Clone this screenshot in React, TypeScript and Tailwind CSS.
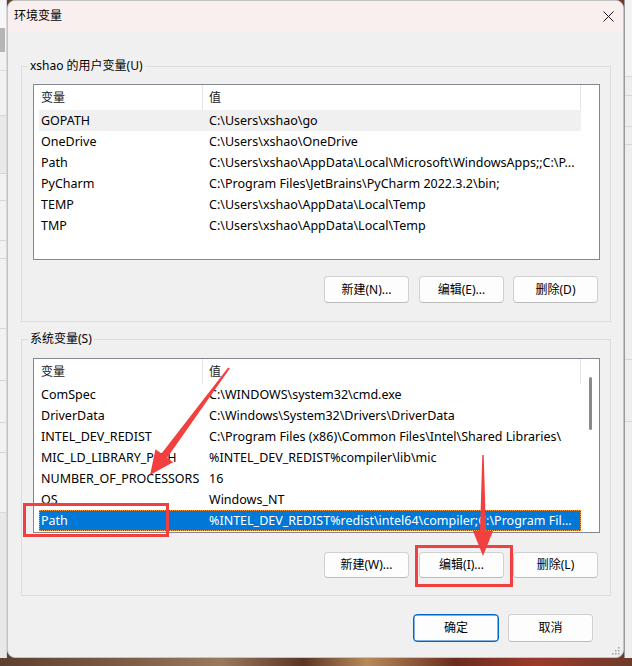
import { memo } from "react";

type Row = { name: string; value: string };

const USER_ROWS: Row[] = [
  { name: "GOPATH", value: "C:\\Users\\xshao\\go" },
  { name: "OneDrive", value: "C:\\Users\\xshao\\OneDrive" },
  { name: "Path", value: "C:\\Users\\xshao\\AppData\\Local\\Microsoft\\WindowsApps;;C:\\P..." },
  { name: "PyCharm", value: "C:\\Program Files\\JetBrains\\PyCharm 2022.3.2\\bin;" },
  { name: "TEMP", value: "C:\\Users\\xshao\\AppData\\Local\\Temp" },
  { name: "TMP", value: "C:\\Users\\xshao\\AppData\\Local\\Temp" },
];

const SYSTEM_ROWS: Row[] = [
  { name: "ComSpec", value: "C:\\WINDOWS\\system32\\cmd.exe" },
  { name: "DriverData", value: "C:\\Windows\\System32\\Drivers\\DriverData" },
  { name: "INTEL_DEV_REDIST", value: "C:\\Program Files (x86)\\Common Files\\Intel\\Shared Libraries\\" },
  { name: "MIC_LD_LIBRARY_PATH", value: "%INTEL_DEV_REDIST%compiler\\lib\\mic" },
  { name: "NUMBER_OF_PROCESSORS", value: "16" },
  { name: "OS", value: "Windows_NT" },
  { name: "Path", value: "%INTEL_DEV_REDIST%redist\\intel64\\compiler;C:\\Program Fil..." },
];

const VarList = memo(function VarList({
  rows,
  height,
  hover,
  selected,
  scroll,
}: {
  rows: Row[];
  height: string;
  hover?: number;
  selected?: number;
  scroll?: boolean;
}) {
  return (
    <div className={`ml-[11px] w-[567px] ${height} border border-[#828790] bg-white flex overflow-hidden`}>
      <div className="ml-[5px] w-[542px] flex flex-col">
        <div className="h-[25px] shrink-0 flex border-r border-[#e5e5e5] text-[#1a1a1a]">
          <div className="w-[164px] border-r border-[#e5e5e5] pl-[2px] flex items-center">变量</div>
          <div className="pl-[6px] flex items-center">值</div>
        </div>
        {rows.map((r, i) => {
          const sel = i === selected;
          const hov = i === hover;
          return (
            <div
              key={r.name + i}
              className={`h-[21px] shrink-0 pt-[1px] flex items-center whitespace-nowrap text-[12.5px] ${
                sel
                  ? "bg-[#0078d7] text-white outline outline-1 outline-dotted outline-[#ff9a3c] -outline-offset-1"
                  : hov
                  ? "bg-[#f0f0f0] text-black"
                  : "text-black"
              }`}
            >
              <div className="w-[164px] pl-[2px] truncate">{r.name}</div>
              <div className="flex-1 pl-[6px] truncate">{r.value}</div>
            </div>
          );
        })}
      </div>
      <div className="w-[18px] pt-[18px]">
        {scroll && <div className="ml-[8px] w-[3px] h-[53px] rounded-full bg-[#8a8a8a]" />}
      </div>
    </div>
  );
});

function Btn({ label, primary, h = "h-[27px]", w = "w-[85px]" }: { label: string; primary?: boolean; h?: string; w?: string }) {
  return (
    <div
      className={`${w} ${h} rounded-[4px] bg-[#fdfdfd] flex items-center justify-center text-[12px] text-black ${
        primary ? "border border-[#0067c0] shadow-[inset_0_0_0_0.5px_#0067c0]" : "border border-[#d0d0d0] border-b-[#bcbcbc]"
      }`}
    >
      {label}
    </div>
  );
}

function Group({ label, children, className }: { label: string; children: React.ReactNode; className?: string }) {
  return (
    <fieldset className={`ml-[13px] w-[590px] border border-[#dcdcdc] ${className ?? ""}`}>
      <legend className="ml-[6px] px-[2px] leading-[16px] text-black">{label}</legend>
      {children}
    </fieldset>
  );
}

function LeftStrip() {
  return (
    <div className="w-[7px] h-full bg-[#f2f2f2] flex flex-col border-r border-[#d6d6d6]">
      <div className="h-[28px] bg-[#f7f7f7]" />
      <div className="h-[24px] bg-[#8c8c8c] w-[5px] opacity-60" />
      <div className="h-[18px]" />
      <div className="h-[45px] border-t border-[#e0e0e0]" />
      <div className="h-[58px] border-t border-[#d8d8d8] bg-[#e9e9e9]" />
      <div className="h-[27px] border-t border-[#d8d8d8]" />
      <div className="h-[40px] border-t border-[#d8d8d8]" />
      <div className="h-[18px] border-t border-[#d8d8d8]" />
      <div className="h-[70px] border-t border-[#d8d8d8]" />
      <div className="h-[52px] border-t border-[#d8d8d8]" />
      <div className="h-[42px] border-t border-[#d8d8d8]" />
      <div className="h-[30px] border-t border-[#d8d8d8]" />
      <div className="h-[60px] border-t border-[#d8d8d8]" />
      <div className="flex-1 border-t border-[#d8d8d8] bg-[#e8e8e8]" />
    </div>
  );
}

function RightStrip() {
  return (
    <div className="w-[8px] h-full bg-[#eeeeee] flex flex-col border-l border-[#9a9a9a]">
      <div className="h-[76px] bg-[#f3f3f3]" />
      <div className="h-[19px] border-t border-[#d6d6d6]" />
      <div className="h-[31px] border-t border-[#d6d6d6]" />
      <div className="h-[18px] border-t border-[#d6d6d6]" />
      <div className="h-[215px] border-t border-[#d6d6d6]" />
      <div className="h-[62px] border-t border-[#d6d6d6]" />
      <div className="flex-1 border-t border-[#d6d6d6]" />
    </div>
  );
}

export default function App() {
  return (
    <div className="relative w-[632px] h-[666px] overflow-hidden bg-[linear-gradient(90deg,#5e4030,#7d5c48_20%,#9a7a5c_35%,#5a3526_48%,#b88a58_58%,#6a2c1e_72%,#9c3a2a_85%,#6e3a2c)] font-['Noto_Sans','Noto_Sans_CJK_SC',sans-serif] text-[12px]">
      <div className="flex h-[658px]">
        <LeftStrip />
        <div className="w-[617px] h-full rounded-[8px] border border-[#c4c4c4] bg-[#f0f0f0] flex flex-col overflow-hidden">
          <div className="h-[30px] shrink-0 bg-[#f9efee] flex items-center justify-between">
            <span className="pl-[6px] text-black">环境变量</span>
            <svg width="11" height="11" viewBox="0 0 11 11" className="mr-[9px]">
              <path d="M0.5 0.5 L10.5 10.5 M10.5 0.5 L0.5 10.5" stroke="#1a1a1a" strokeWidth="1" />
            </svg>
          </div>

          <Group label="xshao 的用户变量(U)" className="mt-[27px] pb-[18px]">
            <div className="mt-[10px]">
              <VarList rows={USER_ROWS} height="h-[176px]" hover={0} />
            </div>
            <div className="mt-[16px] mr-[12px] flex justify-end gap-[10px]">
              <Btn label="新建(N)..." />
              <Btn label="编辑(E)..." />
              <div className="-ml-[1px]">
                <Btn label="删除(D)" />
              </div>
            </div>
          </Group>

          <Group label="系统变量(S)" className="mt-[9px] pb-[17px]">
            <div className="mt-[11px]">
              <VarList rows={SYSTEM_ROWS} height="h-[175px]" selected={6} scroll />
            </div>
            <div className="mt-[19px] mr-[12px] flex justify-end gap-[10px]">
              <Btn label="新建(W)..." h="h-[26px]" />
              <Btn label="编辑(I)..." h="h-[26px]" />
              <div className="-ml-[1px]">
                <Btn label="删除(L)" h="h-[26px]" />
              </div>
            </div>
          </Group>

          <div className="mt-[18px] pr-[30px] flex justify-end gap-[9px]">
            <Btn label="确定" primary h="h-[28px]" w="w-[86px]" />
            <Btn label="取消" h="h-[28px]" />
          </div>

          <div className="flex-1 flex items-end justify-end pr-[3px] pb-[2px]">
            <svg width="8" height="8" viewBox="0 0 8 8">
              <rect x="6" y="0" width="1.5" height="1.5" fill="#a0a0a0" />
              <rect x="3" y="3" width="1.5" height="1.5" fill="#a0a0a0" />
              <rect x="6" y="3" width="1.5" height="1.5" fill="#a0a0a0" />
              <rect x="0" y="6" width="1.5" height="1.5" fill="#a0a0a0" />
              <rect x="3" y="6" width="1.5" height="1.5" fill="#a0a0a0" />
              <rect x="6" y="6" width="1.5" height="1.5" fill="#a0a0a0" />
            </svg>
          </div>
        </div>
        <RightStrip />
      </div>

      {/* red annotations drawn over the screenshot */}
      <div className="absolute left-[23px] top-[503px] w-[146px] h-[34px] border-[3px] border-[#f23f3f]" />
      <div className="absolute left-[415px] top-[545px] w-[98px] h-[42px] border-[3px] border-[#f23f3f]" />
      <svg className="absolute left-0 top-0 pointer-events-none" width="632" height="666" viewBox="0 0 632 666">
        <polygon
          points="228.2,367.4 161.5,453.6 155.5,449.2 150,475 173.1,462.2 167.1,457.8 229.8,368.6"
          fill="#f23f3f"
        />
        <polygon points="482.3,455 480,531 473,531 483,556 493,531 486,531 483.7,455" fill="#f23f3f" />
      </svg>
    </div>
  );
}
